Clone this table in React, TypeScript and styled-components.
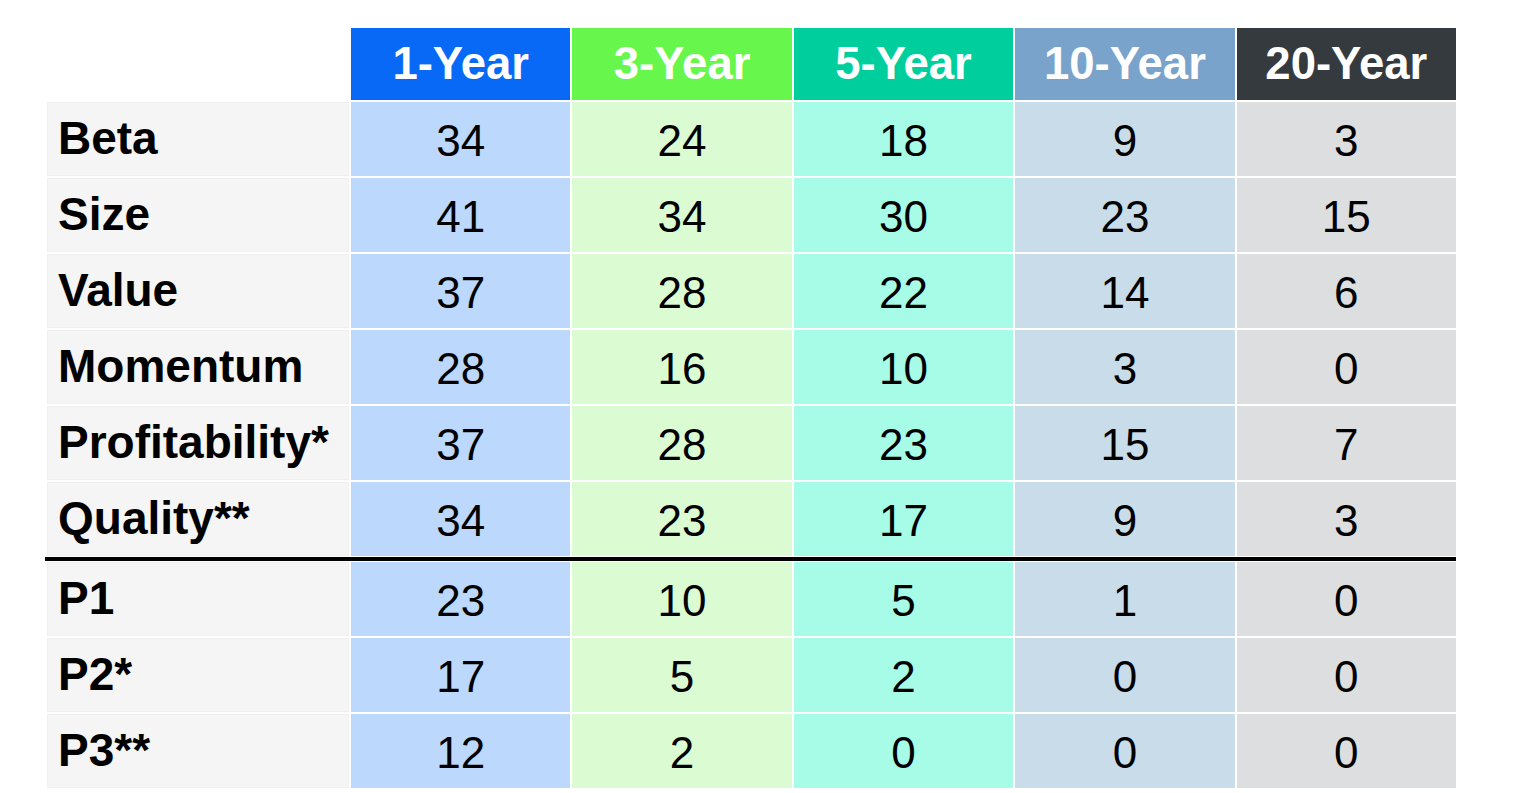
import React from "react";
import styled, { createGlobalStyle } from "styled-components";

const GlobalStyle = createGlobalStyle`
  html, body {
    margin: 0;
    padding: 0;
    background: #ffffff;
  }
  body {
    font-family: "Liberation Sans", Arial, Helvetica, sans-serif;
    color: #000000;
  }
`;

type Column = {
  title: string;
  head: string;
  cell: string;
};

const columns: Column[] = [
  { title: "1-Year", head: "#0869f7", cell: "#bcd8fc" },
  { title: "3-Year", head: "#67f64b", cell: "#dbfcd2" },
  { title: "5-Year", head: "#00cf9d", cell: "#a6fce6" },
  { title: "10-Year", head: "#79a3cb", cell: "#c9dcea" },
  { title: "20-Year", head: "#353a3f", cell: "#dddee0" },
];

const rows: { label: string; values: number[] }[] = [
  { label: "Beta", values: [34, 24, 18, 9, 3] },
  { label: "Size", values: [41, 34, 30, 23, 15] },
  { label: "Value", values: [37, 28, 22, 14, 6] },
  { label: "Momentum", values: [28, 16, 10, 3, 0] },
  { label: "Profitability*", values: [37, 28, 23, 15, 7] },
  { label: "Quality**", values: [34, 23, 17, 9, 3] },
  { label: "P1", values: [23, 10, 5, 1, 0] },
  { label: "P2*", values: [17, 5, 2, 0, 0] },
  { label: "P3**", values: [12, 2, 0, 0, 0] },
];

const Page = styled.div`
  padding: 28px 0 0 47px;
`;

const Table = styled.div`
  width: 1409px;
  display: flex;
  flex-direction: column;
  gap: 2px;
`;

const Row = styled.div<{ $height: number }>`
  display: grid;
  grid-template-columns: 302px repeat(5, 1fr);
  column-gap: 2px;
  height: ${(p) => p.$height}px;
`;

const Corner = styled.div`
  background: #ffffff;
`;

const HeadCell = styled.div<{ $bg: string }>`
  background: ${(p) => p.$bg};
  color: #ffffff;
  font-weight: 700;
  font-size: 45.5px;
  display: flex;
  align-items: center;
  justify-content: center;
  padding-bottom: 1px;
`;

const LabelCell = styled.div`
  background: #f5f5f5;
  font-weight: 700;
  font-size: 46px;
  display: flex;
  align-items: center;
  padding: 0 0 3px 11px;
  box-shadow: inset 0 0 0 1px #f0f0f0;
`;

const ValueCell = styled.div<{ $bg: string }>`
  background: ${(p) => p.$bg};
  font-size: 44px;
  display: flex;
  align-items: center;
  justify-content: center;
  padding-top: 4px;
`;

const Divider = styled.div`
  height: 4px;
  background: #000000;
  margin: -1px 0 -1px -2px;
`;

export default function App() {
  return (
    <>
      <GlobalStyle />
      <Page>
        <Table>
          <Row $height={72}>
            <Corner />
            {columns.map((c) => (
              <HeadCell key={c.title} $bg={c.head}>
                {c.title}
              </HeadCell>
            ))}
          </Row>
          {rows.map((r, i) => (
            <React.Fragment key={r.label}>
              {i === 6 && <Divider />}
              <Row $height={74}>
                <LabelCell>{r.label}</LabelCell>
                {r.values.map((v, j) => (
                  <ValueCell key={j} $bg={columns[j].cell}>
                    {v}
                  </ValueCell>
                ))}
              </Row>
            </React.Fragment>
          ))}
        </Table>
      </Page>
    </>
  );
}
